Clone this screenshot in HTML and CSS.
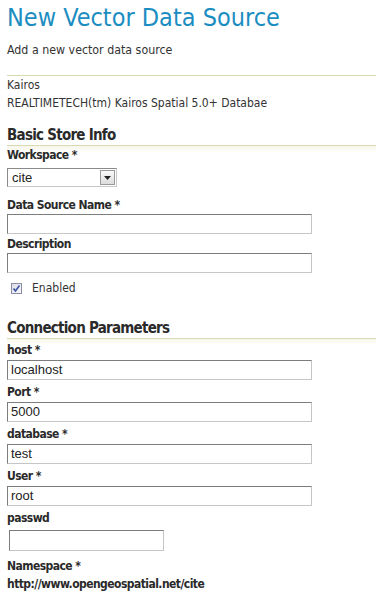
FILE: index.html
```html
<!DOCTYPE html>
<html>
<head>
<meta charset="utf-8">
<link rel="stylesheet" href="styles.css">
</head>
<body>
<div class="page">
  <h1 class="title">New Vector Data Source</h1>
  <p class="subtitle">Add a new vector data source</p>
  <div class="store-desc">
    <div class="line">Kairos</div>
    <div class="line">REALTIMETECH(tm) Kairos Spatial 5.0+ Databae</div>
  </div>

  <h2 class="section">Basic Store Info</h2>
  <div class="label">Workspace *</div>
  <div class="select">
    <span class="select-value">cite</span>
    <span class="select-btn"><svg width="7" height="4" viewBox="0 0 7 4"><path d="M0 0H7L3.5 4Z" fill="#222"/></svg></span>
  </div>
  <div class="label">Data Source Name *</div>
  <div class="input"></div>
  <div class="label">Description</div>
  <div class="input"></div>
  <div class="check-row">
    <span class="checkbox"><svg width="9" height="9" viewBox="0 0 9 9"><path d="M1.5 4.5L3.5 7L7.5 1.5" fill="none" stroke="#3a52a8" stroke-width="1.6"/></svg></span>
    <span class="check-label">Enabled</span>
  </div>

  <h2 class="section section-2">Connection Parameters</h2>
  <div class="label first">host *</div>
  <div class="input conn">localhost</div>
  <div class="label">Port *</div>
  <div class="input conn">5000</div>
  <div class="label">database *</div>
  <div class="input conn">test</div>
  <div class="label">User *</div>
  <div class="input conn">root</div>
  <div class="label">passwd</div>
  <div class="input pass"></div>
  <div class="label">Namespace *</div>
  <div class="label">http://www.opengeospatial.net/cite</div>
</div>
</body>
</html>
```

FILE: styles.css
```css
html, body {
  margin: 0;
  padding: 0;
  background: #fff;
}
.page {
  padding: 0 7px;
  font-family: "DejaVu Sans Condensed", "DejaVu Sans", sans-serif;
  color: #333;
}
.title {
  margin: 0;
  font-weight: normal;
  font-size: 25px;
  line-height: 36px;
  color: #1b8dc1;
}
.subtitle {
  margin: 5px -7px 0 0;
  font-size: 12.3px;
  line-height: 18px;
  padding-bottom: 16px;
  border-bottom: 1px solid #d9d9b4;
}
.line {
  font-size: 12px;
  line-height: 18px;
}
.section {
  margin: 13px -7px 0 0;
  font-size: 15px;
  letter-spacing: -0.75px;
  font-weight: bold;
  line-height: 20px;
  color: #2a2a2a;
  border-bottom: 1px solid #d9d9b4;
  position: relative;
}
.section::after {
  content: "";
  position: absolute;
  left: 0;
  right: 0;
  top: 21px;
  height: 6px;
  background: linear-gradient(#f6f6ea, #fff);
}
.section-2 {
  margin-top: 23px;
}
.label {
  font-size: 12px;
  font-weight: bold;
  letter-spacing: -0.55px;
  line-height: 18px;
  color: #2a2a2a;
  position: relative;
}
.label.first {
  margin-top: 2px;
}
.select {
  margin: 4px 0 9px;
  width: 108px;
  height: 17px;
  border: 1px solid #8a8a8a;
  border-right-color: #c8c8c8;
  border-bottom-color: #c8c8c8;
  display: flex;
  align-items: center;
  justify-content: space-between;
  font-family: "Liberation Sans", Arial, sans-serif;
  font-size: 13px;
  color: #222;
}
.select-value {
  padding-left: 4px;
}
.select-btn {
  width: 15px;
  height: 15px;
  margin-right: 1px;
  box-sizing: border-box;
  border: 1px solid #9a9a9a;
  background: linear-gradient(#fafafa, #dcdcdc);
  display: flex;
  align-items: center;
  justify-content: center;
}
.input {
  box-sizing: border-box;
  width: 305px;
  height: 20px;
  border: 1px solid #7d7d7d;
  border-right-color: #c6c6c6;
  border-bottom-color: #c6c6c6;
  margin: 0 0 1px;
  font-family: "Liberation Sans", Arial, sans-serif;
  font-size: 13px;
  line-height: 18px;
  padding-left: 3px;
  color: #222;
}
.check-row {
  display: flex;
  align-items: center;
  margin-top: 8px;
  height: 14px;
}
.checkbox {
  margin-left: 4px;
  width: 11px;
  height: 11px;
  box-sizing: border-box;
  border: 1px solid #8a8ea8;
  background: linear-gradient(135deg, #dcdce4, #f8f8fa);
  display: flex;
  align-items: center;
  justify-content: center;
}
.check-label {
  margin-left: 10px;
  font-size: 12px;
  color: #333;
}
.input.conn {
  margin: 1px 0 3px;
}
.input.pass {
  width: 155px;
  height: 21px;
  margin: 3px 0 6px 2px;
}
```
